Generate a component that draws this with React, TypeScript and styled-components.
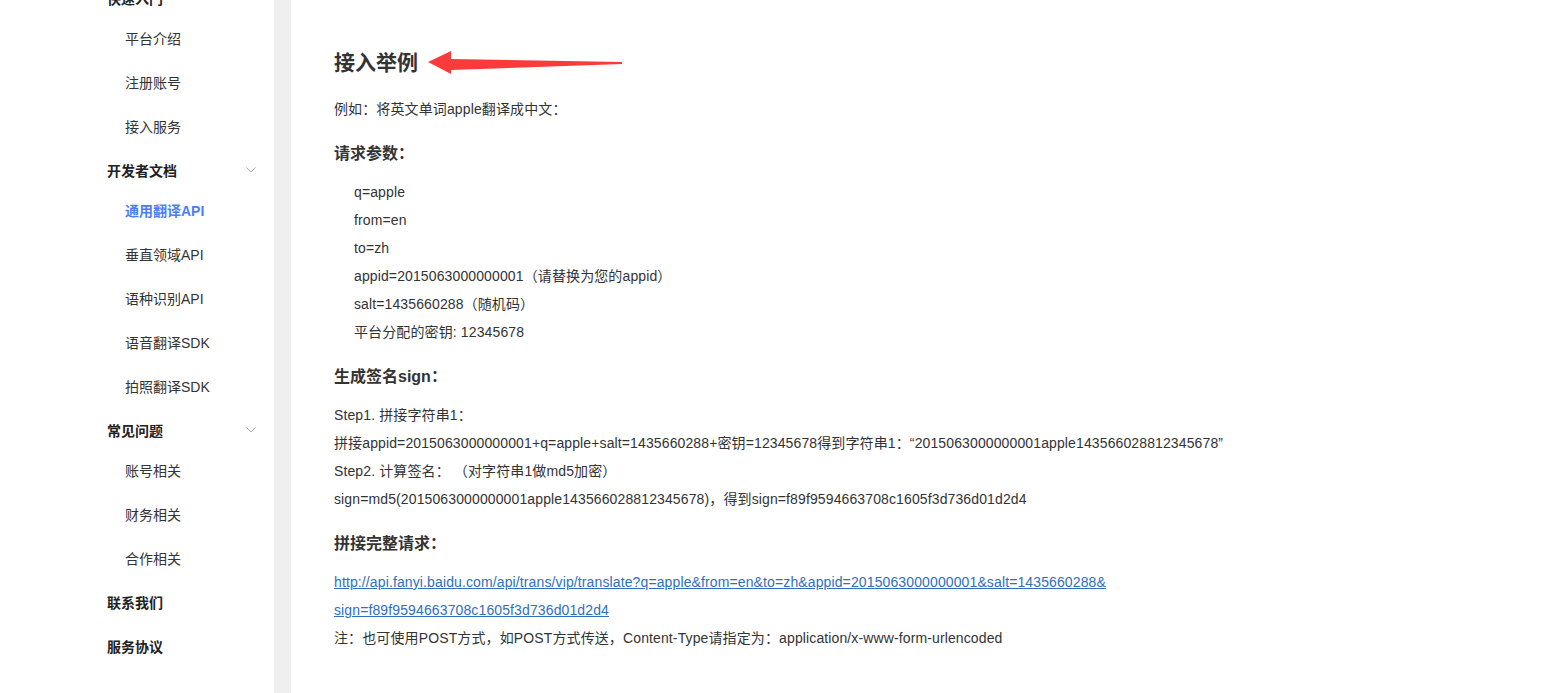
import React from "react";
import styled, { createGlobalStyle } from "styled-components";

const GlobalStyle = createGlobalStyle`
  html, body {
    margin: 0;
    padding: 0;
    background: #fff;
    font-family: "Liberation Sans", "Noto Sans CJK SC", sans-serif;
    color: #333;
  }
  * { box-sizing: border-box; }
`;

interface NavGroup {
  title: string;
  children?: string[];
}

const menu: NavGroup[] = [
  { title: "快速入门", children: ["平台介绍", "注册账号", "接入服务"] },
  {
    title: "开发者文档",
    children: ["通用翻译API", "垂直领域API", "语种识别API", "语音翻译SDK", "拍照翻译SDK"],
  },
  { title: "常见问题", children: ["账号相关", "财务相关", "合作相关"] },
  { title: "联系我们" },
  { title: "服务协议" },
];

const activeItem = "通用翻译API";

const params = [
  "q=apple",
  "from=en",
  "to=zh",
  "appid=2015063000000001（请替换为您的appid）",
  "salt=1435660288（随机码）",
  "平台分配的密钥: 12345678",
];

const steps = [
  "Step1. 拼接字符串1：",
  "拼接appid=2015063000000001+q=apple+salt=1435660288+密钥=12345678得到字符串1：“2015063000000001apple143566028812345678”",
  "Step2. 计算签名：\u00a0（对字符串1做md5加密）",
  "sign=md5(2015063000000001apple143566028812345678)，得到sign=f89f9594663708c1605f3d736d01d2d4",
];

function Chevron() {
  return (
    <svg width="10" height="6" viewBox="0 0 10 6" fill="none">
      <path d="M0.5 0.5 L5 5 L9.5 0.5" stroke="#aaa" strokeWidth="1" />
    </svg>
  );
}

function Arrow() {
  return (
    <svg width="196" height="24" viewBox="0 0 196 24">
      <path
        d="M0 11 L23 0 L23 8 L194 11 L194 13 L23 19 L23 23 Z"
        fill="#f93b3b"
      />
    </svg>
  );
}

export default function App() {
  return (
    <>
      <GlobalStyle />
      <Page>
        <Sidebar>
          <NavList>
            {menu.map((group) => (
              <li key={group.title}>
                <GroupTitle>
                  <span>{group.title}</span>
                  {group.children && <Chevron />}
                </GroupTitle>
                {group.children && (
                  <SubList>
                    {group.children.map((child) => (
                      <SubItem key={child} $active={child === activeItem}>
                        {child}
                      </SubItem>
                    ))}
                  </SubList>
                )}
              </li>
            ))}
          </NavList>
        </Sidebar>
        <Gutter />
        <Content>
          <TitleRow>
            <Title>接入举例</Title>
            <Arrow />
          </TitleRow>
          <Text>例如：将英文单词apple翻译成中文：</Text>

          <Heading>请求参数：</Heading>
          <Indented>
            {params.map((p) => (
              <Text key={p}>{p}</Text>
            ))}
          </Indented>

          <Heading>生成签名sign：</Heading>
          {steps.map((s) => (
            <Text key={s}>{s}</Text>
          ))}

          <Heading>拼接完整请求：</Heading>
          <Text>
            <Link href="#">
              http://api.fanyi.baidu.com/api/trans/vip/translate?q=apple&amp;from=en&amp;to=zh&amp;appid=2015063000000001&amp;salt=1435660288&amp;
              <br />
              sign=f89f9594663708c1605f3d736d01d2d4
            </Link>
          </Text>
          <Text>
            注：也可使用POST方式，如POST方式传送，Content-Type请指定为：application/x-www-form-urlencoded
          </Text>
        </Content>
      </Page>
    </>
  );
}

const Page = styled.div`
  display: flex;
  height: 693px;
  overflow: hidden;
`;

const Sidebar = styled.aside`
  width: 274px;
  flex-shrink: 0;
  background: #fff;
  font-size: 14px;
`;

const NavList = styled.ul`
  list-style: none;
  margin: -24px 0 0;
  padding: 0;
`;

const GroupTitle = styled.div`
  height: 44px;
  display: flex;
  align-items: center;
  justify-content: space-between;
  padding: 0 18px 0 107px;
  font-weight: bold;
  color: #222;
`;

const SubList = styled.ul`
  list-style: none;
  margin: -4px 0 0;
  padding: 0;
`;

const SubItem = styled.li<{ $active?: boolean }>`
  height: 44px;
  display: flex;
  align-items: center;
  padding-left: 125px;
  color: ${(p) => (p.$active ? "#4b7ef6" : "#333")};
  font-weight: ${(p) => (p.$active ? "bold" : "normal")};
`;

const Gutter = styled.div`
  width: 17px;
  flex-shrink: 0;
  background: #efefef;
`;

const Content = styled.main`
  flex: 1;
  padding: 49px 0 0 43px;
  font-size: 14px;
`;

const TitleRow = styled.div`
  display: flex;
  align-items: center;
  gap: 10px;
  height: 28px;
`;

const Title = styled.h1`
  margin: 0;
  font-size: 21px;
  line-height: 28px;
  font-weight: bold;
  color: #333;
`;

const Heading = styled.h3`
  margin: 17px 0 10px;
  font-size: 16px;
  line-height: 28px;
  font-weight: bold;
  color: #333;
`;

const Text = styled.p`
  margin: 0;
  line-height: 28px;
  color: #333;
  white-space: nowrap;
  letter-spacing: 0.12px;

  ${TitleRow} + & {
    margin-top: 18px;
  }
`;

const Indented = styled.div`
  padding-left: 20px;
`;

const Link = styled.a`
  color: #2f6fbd;
  text-decoration: underline;
`;
